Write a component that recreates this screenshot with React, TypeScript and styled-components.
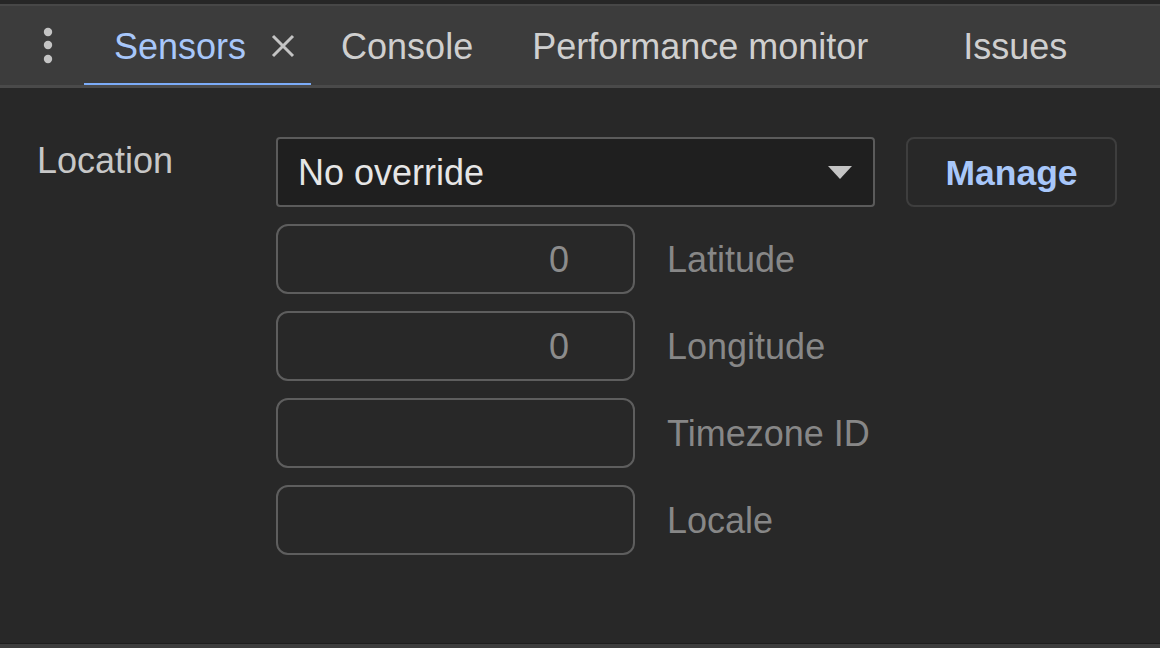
import React from "react";
import styled, { createGlobalStyle } from "styled-components";

const Global = createGlobalStyle`
  html, body { margin: 0; padding: 0; background: #282828; }
  body { font-family: "Liberation Sans", Arial, Helvetica, sans-serif; }
  * { box-sizing: border-box; }
`;

const Page = styled.div`
  width: 1160px;
  height: 648px;
  display: flex;
  flex-direction: column;
  background: #282828;
  overflow: hidden;
`;

const TopStrip = styled.div`
  height: 4px;
  background: #262626;
  flex: none;
`;

const Toolbar = styled.div`
  height: 84px;
  flex: none;
  display: flex;
  align-items: stretch;
  background: #3c3c3c;
  border-top: 2px solid #474747;
  border-bottom: 3px solid #4a4a4a;
  white-space: nowrap;
  overflow: hidden;
`;

const MenuButton = styled.div`
  width: 84px;
  flex: none;
  display: flex;
  align-items: center;
  padding-left: 40px;
`;

const Tab = styled.div<{ $active?: boolean; $closable?: boolean }>`
  position: relative;
  flex: none;
  display: flex;
  align-items: center;
  gap: 25px;
  padding: 0 ${(p) => (p.$closable ? 16 : 29)}px 0 30px;
  font-size: 36px;
  color: ${(p) => (p.$active ? "#a8c7fa" : "#cfcfcf")};
  &::after {
    content: "";
    display: ${(p) => (p.$active ? "block" : "none")};
    position: absolute;
    left: 0;
    right: 0;
    bottom: -3px;
    height: 5px;
    background: #7cacf8;
  }
`;

const TabLabel = styled.span`
  padding-top: 3px;
`;

const CloseSlot = styled.span<{ $hidden?: boolean }>`
  width: 24px;
  height: 24px;
  display: flex;
  visibility: ${(p) => (p.$hidden ? "hidden" : "visible")};
`;

const Content = styled.div`
  flex: 1;
  padding: 49px 43px 0 37px;
  display: grid;
  grid-template-columns: 208px 599px 211px;
  column-gap: 31px;
  grid-auto-rows: min-content;
  row-gap: 17px;
  align-content: start;
`;

const SectionLabel = styled.div`
  font-size: 36px;
  color: #c7c7c7;
  padding-top: 3px;
  line-height: 41px;
`;

const Select = styled.div`
  height: 70px;
  background: #1f1f1f;
  border: 2px solid #5b5b5b;
  border-radius: 4px;
  display: flex;
  align-items: center;
  justify-content: space-between;
  padding: 2px 21px 0 20px;
  font-size: 36px;
  color: #e6e6e6;
`;

const ManageButton = styled.div`
  height: 70px;
  border: 2px solid #3e3e3e;
  border-radius: 8px;
  display: flex;
  align-items: center;
  justify-content: center;
  padding-top: 2px;
  font-size: 35.5px;
  font-weight: bold;
  color: #a8c7fa;
`;

const FieldRow = styled.div`
  grid-column: 2 / 4;
  display: flex;
  align-items: center;
  gap: 32px;
`;

const Field = styled.div`
  width: 359px;
  height: 70px;
  border: 2.5px solid #5e5e5e;
  border-radius: 12px;
  display: flex;
  align-items: center;
  justify-content: flex-end;
  padding: 2px 64px 0 0;
  font-size: 36px;
  color: #8c8c8c;
`;

const FieldLabel = styled.div`
  font-size: 36px;
  padding-top: 2px;
  color: #878787;
`;

const Footer = styled.div`
  height: 5px;
  flex: none;
  background: #3d3d3d;
  border-top: 1px solid #1e1e1e;
`;

const Dots = () => (
  <svg width="16" height="40" viewBox="0 0 16 40">
    <circle cx="8" cy="6" r="4.2" fill="#c4c4c4" />
    <circle cx="8" cy="19" r="4.2" fill="#c4c4c4" />
    <circle cx="8" cy="33" r="4.2" fill="#c4c4c4" />
  </svg>
);

const CloseIcon = () => (
  <svg width="24" height="24" viewBox="0 0 24 24">
    <path d="M2 2 L22 22 M22 2 L2 22" stroke="#c4c4c4" strokeWidth="3" strokeLinecap="butt" />
  </svg>
);

const Caret = () => (
  <svg width="24" height="14" viewBox="0 0 24 14">
    <path d="M0 0 H24 L12 13 Z" fill="#c4c4c4" />
  </svg>
);

const fields: { value: string; label: string }[] = [
  { value: "0", label: "Latitude" },
  { value: "0", label: "Longitude" },
  { value: "", label: "Timezone ID" },
  { value: "", label: "Locale" },
];

export default function App() {
  return (
    <Page>
      <Global />
      <TopStrip />
      <Toolbar>
        <MenuButton>
          <Dots />
        </MenuButton>
        <Tab $active $closable>
          <TabLabel>Sensors</TabLabel>
          <CloseSlot>
            <CloseIcon />
          </CloseSlot>
        </Tab>
        <Tab>
          <TabLabel>Console</TabLabel>
        </Tab>
        <Tab $closable>
          <TabLabel>Performance monitor</TabLabel>
          <CloseSlot $hidden>
            <CloseIcon />
          </CloseSlot>
        </Tab>
        <Tab $closable>
          <TabLabel>Issues</TabLabel>
          <CloseSlot $hidden>
            <CloseIcon />
          </CloseSlot>
        </Tab>
        <Tab>
          <TabLabel>Sources</TabLabel>
        </Tab>
      </Toolbar>
      <Content>
        <SectionLabel>Location</SectionLabel>
        <Select>
          <span>No override</span>
          <Caret />
        </Select>
        <ManageButton>Manage</ManageButton>
        {fields.map((f) => (
          <FieldRow key={f.label}>
            <Field>{f.value}</Field>
            <FieldLabel>{f.label}</FieldLabel>
          </FieldRow>
        ))}
      </Content>
      <Footer />
    </Page>
  );
}
